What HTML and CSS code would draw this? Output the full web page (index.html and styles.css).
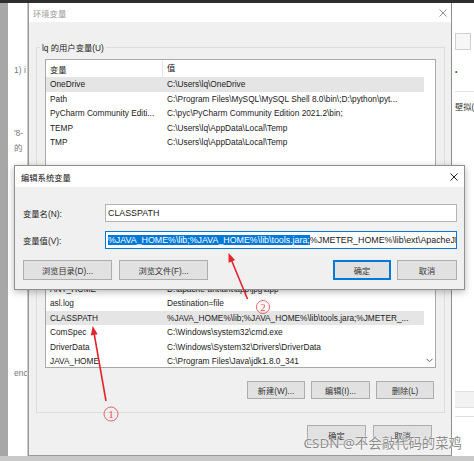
FILE: index.html
```html
<!DOCTYPE html>
<html lang="zh">
<head>
<meta charset="utf-8">
<title>环境变量</title>
<link rel="stylesheet" href="styles.css">
</head>
<body>
<div class="screen">
  <div class="topbar"></div>
  <div class="desk">
    <div class="strip-left"></div>
    <div class="bg-left">
      <span class="bgt t1">1) i</span>
      <span class="bgt t2">'8-</span>
      <span class="bgt t3">的</span>
      <span class="bgt t4">enc</span>
    </div>
    <div class="env">
      <div class="env-title">
        <span class="env-name">环境变量</span>
        <svg class="xicon xgray" viewBox="0 0 8 8" width="8" height="8"><path d="M0.5 0.5 L7.5 7.5 M7.5 0.5 L0.5 7.5"/></svg>
      </div>
      <div class="env-body">
        <div class="group">
          <div class="legend">lq 的用户变量(U)</div>
          <div class="list">
            <div class="rows">
              <div class="hdr"><span class="c1">变量</span><span class="c2">值</span></div>
              <div class="row sel"><span class="c1">OneDrive</span><span class="c2">C:\Users\lq\OneDrive</span></div>
              <div class="row"><span class="c1">Path</span><span class="c2">C:\Program Files\MySQL\MySQL Shell 8.0\bin\;D:\python\pyt...</span></div>
              <div class="row"><span class="c1">PyCharm Community Editi...</span><span class="c2">C:\pyc\PyCharm Community Edition 2021.2\bin;</span></div>
              <div class="row"><span class="c1">TEMP</span><span class="c2">C:\Users\lq\AppData\Local\Temp</span></div>
              <div class="row"><span class="c1">TMP</span><span class="c2">C:\Users\lq\AppData\Local\Temp</span></div>
            </div>
            <div class="sb"></div>
          </div>
          <div class="btns">
            <span class="btn bw58">新建(N)...</span>
            <span class="btn bw59">编辑(E)...</span>
            <span class="btn bw58">删除(D)</span>
          </div>
        </div>
        <div class="group g2">
          <div class="legend">系统变量(S)</div>
          <div class="list">
            <div class="rows">
              <div class="hdr"><span class="c1">变量</span><span class="c2">值</span></div>
              <div class="row"><span class="c1">ALLUSERSPROFILE</span><span class="c2">C:\ProgramData</span></div>
              <div class="row"><span class="c1">ANT_HOME</span><span class="c2">D:\apache-ant\ant\app\jpg\app</span></div>
              <div class="row"><span class="c1">asl.log</span><span class="c2">Destination=file</span></div>
              <div class="row sel"><span class="c1">CLASSPATH</span><span class="c2">%JAVA_HOME%\lib;%JAVA_HOME%\lib\tools.jara;%JMETER_...</span></div>
              <div class="row"><span class="c1">ComSpec</span><span class="c2">C:\Windows\system32\cmd.exe</span></div>
              <div class="row"><span class="c1">DriverData</span><span class="c2">C:\Windows\System32\Drivers\DriverData</span></div>
              <div class="row"><span class="c1">JAVA_HOME</span><span class="c2">C:\Program Files\Java\jdk1.8.0_341</span></div>
            </div>
            <div class="sb sb-on">
              <svg class="chev" viewBox="0 0 7 5" width="7" height="5"><path d="M0.5 0.8 L3.5 3.8 L6.5 0.8"/></svg>
            </div>
          </div>
          <div class="btns">
            <span class="btn bw58">新建(W)...</span>
            <span class="btn bw59">编辑(I)...</span>
            <span class="btn bw58">删除(L)</span>
          </div>
        </div>
        <div class="dlg-btns">
          <span class="btn dbtn">确定</span>
          <span class="btn dbtn">取消</span>
        </div>
      </div>
    </div>
    <div class="bg-right">
      <div class="r-box"></div>
      <div class="r-dot">•</div>
      <div class="r-line"></div>
      <div class="r-text">壁拟(</div>
      <div class="r-band"></div>
      <div class="r-line2"></div>
    </div>
  </div>
  <div class="bottombar"></div>

  <div class="edit">
    <div class="edit-title">
      <span>编辑系统变量</span>
      <svg class="xicon xdark" viewBox="0 0 8 8" width="8" height="8"><path d="M0.5 0.5 L7.5 7.5 M7.5 0.5 L0.5 7.5"/></svg>
    </div>
    <div class="edit-body">
      <div class="frow">
        <span class="flabel">变量名(N):</span>
        <div class="input">CLASSPATH</div>
      </div>
      <div class="frow frow2">
        <span class="flabel">变量值(V):</span>
        <div class="input focus"><span class="hl">%JAVA_HOME%\lib;%JAVA_HOME%\lib\tools.jara;</span>%JMETER_HOME%\lib\ext\ApacheJMeter_core.jar;</div>
      </div>
      <div class="ebtns">
        <span class="btn ebw">浏览目录(D)...</span>
        <span class="btn ebw">浏览文件(F)...</span>
        <span class="spacer"></span>
        <span class="btn okbtn">确定</span>
        <span class="btn cbtn">取消</span>
      </div>
    </div>
  </div>

  <svg class="marks" viewBox="0 0 474 461" width="474" height="461">
    <line x1="106" y1="401" x2="94.2" y2="334" class="ln"/>
    <polygon points="92.7,326 97.7,334.3 90.8,335.5" class="ah"/>
    <line x1="247.5" y1="299" x2="231.8" y2="261" class="ln"/>
    <polygon points="228.5,253 235.1,260 228.6,262.7" class="ah"/>
    <circle cx="111" cy="414" r="7" class="cc"/>
    <text x="111" y="418" class="cn">1</text>
    <circle cx="263" cy="307" r="6.5" class="cc"/>
    <text x="263" y="311" class="cn">2</text>
  </svg>

  <div class="watermark">CSDN @不会敲代码的菜鸡</div>
</div>
</body>
</html>
```

FILE: styles.css
```css
* { box-sizing: border-box; }
html, body { margin: 0; padding: 0; }
body {
  width: 474px;
  height: 461px;
  overflow: hidden;
  background: #ffffff;
  font-family: "Liberation Sans", "Noto Sans CJK SC", sans-serif;
  font-size: 8.3px;
  color: #1a1a1a;
}
.screen {
  position: relative;
  width: 474px;
  height: 461px;
  overflow: hidden;
  display: flex;
  flex-direction: column;
}
.topbar { height: 3px; background: #2e2e2e; flex: none; }
.bottombar { height: 5px; background: #c9c9c9; flex: none; }
.desk { height: 453px; display: flex; flex: none; }

.strip-left { width: 8px; background: #a7a7a7; flex: none; }
.bg-left {
  width: 20px;
  flex: none;
  background: #fff;
  display: flex;
  flex-direction: column;
  padding-left: 6px;
  overflow: hidden;
  border-right: 1px solid #c8c8c8;
}
.bgt { color: #777; font-size: 8.5px; line-height: 12px; white-space: nowrap; }
.t1 { margin-top: 61px; }
.t2 { margin-top: 51px; }
.t3 { margin-top: 3px; }
.t4 { margin-top: 213px; }

.env {
  width: 424px;
  flex: none;
  background: #f0f0f0;
  border-left: 1px solid #9a9a9a;
  border-right: 1px solid #8e8e8e;
  border-bottom: 1px solid #9a9a9a;
  display: flex;
  flex-direction: column;
}
.env-title {
  height: 19px;
  background: #fff;
  display: flex;
  align-items: center;
  justify-content: space-between;
  padding: 0 4px 0 4px;
  flex: none;
}
.env-name { color: #9a9a9a; font-size: 8.3px; }
.xicon { display: block; fill: none; stroke-width: 0.9; }
.xgray { stroke: #8a8a8a; }
.xdark { stroke: #222; stroke-width: 1; }

.env-body {
  padding: 25px 6px 0 7px;
  display: flex;
  flex-direction: column;
}
.group {
  border: 1px solid #dcdcdc;
  padding: 0 8px 13px 8px;
  display: flex;
  flex-direction: column;
}
.g2 { margin-top: 14px; }
.legend {
  align-self: flex-start;
  margin: -7px 0 0 -5px;
  padding: 0 2px;
  height: 14px;
  line-height: 14px;
  background: #f0f0f0;
  color: #1a1a1a;
}
.list {
  margin-top: 4px;
  height: 119px;
  border: 1px solid #a9a9a9;
  background: #fff;
  display: flex;
  overflow: hidden;
}
.rows { flex: 1; min-width: 0; display: flex; flex-direction: column; }
.sb { width: 11px; flex: none; background: #fff; display: flex; flex-direction: column; justify-content: flex-end; align-items: center; padding-bottom: 4px; }
.chev { display: block; fill: none; stroke: #606060; stroke-width: 1; }
.hdr {
  height: 17px;
  display: flex;
  align-items: center;
  flex: none;
}
.hdr .c2 { border-left: 1px solid #e5e5e5; height: 17px; line-height: 17px; }
.row {
  height: 14.5px;
  line-height: 14.5px;
  display: flex;
  flex: none;
}
.row.sel { background: #e5e5e5; }
.c1 {
  width: 116px;
  flex: none;
  padding-left: 4px;
  white-space: nowrap;
  overflow: hidden;
}
.c2 {
  flex: 1;
  min-width: 0;
  padding-left: 4px;
  white-space: nowrap;
  overflow: hidden;
}
.row .c2 { padding-left: 5px; }

.btns {
  margin-top: 13px;
  display: flex;
  justify-content: flex-end;
  gap: 6px;
  padding-right: 2px;
}
.btn {
  display: flex;
  align-items: center;
  justify-content: center;
  background: #e1e1e1;
  border: 1px solid #adadad;
  color: #333;
  white-space: nowrap;
  font-size: 8.2px;
}
.btns .btn { height: 18px; }
.bw58 { width: 58px; }
.bw59 { width: 59px; }
.dlg-btns {
  margin-top: 12px;
  display: flex;
  justify-content: flex-end;
  gap: 7px;
  padding-right: 13px;
}
.dbtn { width: 59px; height: 20px; }

.bg-right {
  flex: 1;
  background: #fff;
  display: flex;
  flex-direction: column;
  padding-left: 3px;
  overflow: hidden;
}
.r-box { margin-top: 30px; height: 17px; width: 16px; border: 1px solid #cfcfcf; background: #f6f6f6; }
.r-dot { margin-top: 17px; height: 10px; line-height: 10px; font-size: 7px; color: #555; }
.r-line { margin-top: 14px; height: 1px; background: #e2e2e2; }
.r-text { margin-top: 9px; font-size: 8.3px; line-height: 12px; color: #333; white-space: nowrap; }
.r-band { margin-top: 278px; height: 17px; background: #f2f2f2; border-top: 1px solid #e0e0e0; border-bottom: 1px solid #e0e0e0; }
.r-line2 { margin-top: 8px; height: 1px; background: #dddddd; }

/* edit dialog overlay */
.edit {
  position: absolute;
  left: 14px;
  top: 165px;
  width: 451px;
  height: 125px;
  border: 1px solid #8f8f8f;
  background: #f0f0f0;
  box-shadow: 0 2px 7px rgba(0, 0, 0, 0.28);
  display: flex;
  flex-direction: column;
}
.edit-title {
  height: 21px;
  flex: none;
  background: #fff;
  display: flex;
  align-items: center;
  justify-content: space-between;
  padding: 0 6px 0 6px;
  color: #111;
}
.edit-body {
  padding: 17px 7px 0 8px;
  display: flex;
  flex-direction: column;
}
.frow { display: flex; align-items: center; height: 18px; }
.frow2 { margin-top: 9px; }
.flabel { width: 82px; flex: none; color: #1a1a1a; }
.input {
  flex: 1;
  min-width: 0;
  height: 18px;
  line-height: 16px;
  border: 1px solid #b4b4b4;
  background: #fff;
  padding-left: 2px;
  white-space: nowrap;
  overflow: hidden;
  color: #1a1a1a;
  font-size: 8.85px;
}
.input.focus { border-color: #0078d7; }
.hl { background: #0078d7; color: #fff; }
.ebtns { margin-top: 11px; display: flex; height: 20px; }
.ebtns .btn { height: 20px; }
.ebw { width: 89px; }
.ebw + .ebw { margin-left: 7px; }
.spacer { flex: 1; }
.okbtn { width: 58px; border: 1px solid #0078d7; box-shadow: inset 0 0 0 1px #0078d7; }
.cbtn { width: 60px; margin-left: 6px; }

.marks { position: absolute; left: 0; top: 0; pointer-events: none; }
.ln { stroke: #e3242b; stroke-width: 1.6; }
.ah { fill: #e3242b; }
.cc { fill: none; stroke: #e3545a; stroke-width: 0.9; }
.cn { fill: #e3545a; font-family: "Liberation Serif", serif; font-size: 11px; text-anchor: middle; }

.watermark {
  position: absolute;
  right: 12px;
  top: 435px;
  font-family: "Noto Sans", "Noto Sans CJK SC", sans-serif;
  font-size: 13.4px;
  line-height: 17px;
  color: #8c8c8c;
  text-shadow: 0 0 2px #fff, 0 0 1px #fff;
  white-space: nowrap;
}
```
